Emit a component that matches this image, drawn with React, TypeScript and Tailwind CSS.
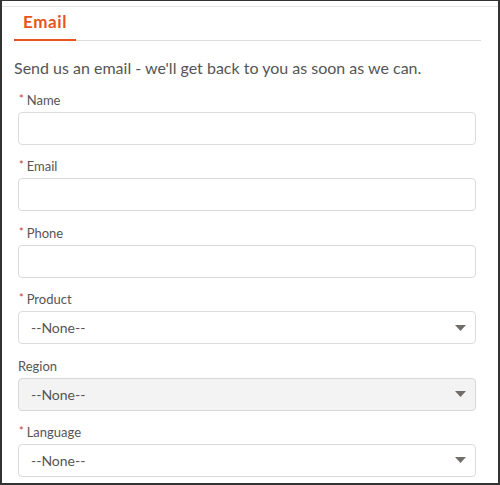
import React from "react";

function Caret() {
  return (
    <svg width="11" height="6" viewBox="0 0 11 6" className="shrink-0">
      <path d="M0 0 H11 L5.5 6 Z" fill="#706e6b" />
    </svg>
  );
}

function Label({ text, required }: { text: string; required?: boolean }) {
  return (
    <div className="h-[21px] flex items-start text-[13px] leading-[16px] text-[#555555] pt-[1px]">
      {required && (
        <span className="text-[#c23934] text-[11px] leading-[12px] mt-[1px] ml-[1px] mr-[3px]">*</span>
      )}
      <span>{text}</span>
    </div>
  );
}

function TextField({ label }: { label: string }) {
  return (
    <div className="flex flex-col">
      <Label text={label} required />
      <div className="h-[33px] rounded-[4px] border border-[#dddbda] bg-white" />
    </div>
  );
}

function SelectField({ label, required, disabled }: { label: string; required?: boolean; disabled?: boolean }) {
  return (
    <div className="flex flex-col">
      <Label text={label} required={required} />
      <div
        className={
          "h-[33px] rounded-[4px] border flex items-center justify-between pl-[12px] pr-[9px] text-[14px] text-[#555555] " +
          (disabled ? "bg-[#f3f3f3] border-[#d8d8d8]" : "bg-white border-[#dddbda]")
        }
      >
        <span>--None--</span>
        <Caret />
      </div>
    </div>
  );
}

export default function App() {
  return (
    <div
      className="w-[500px] h-[485px] bg-white border-[#333333] border-t border-l-2 border-r-2 border-b-2 overflow-hidden"
      style={{ fontFamily: "Lato, 'Open Sans', sans-serif" }}
    >
      <div className="mt-[5px] h-px bg-[#e6e6e6]" />
      <div className="ml-[12px] mr-[17px] border-b border-[#dcdcdc] flex">
        <div className="w-[62px] h-[34px] border-b-2 border-[#e8541c] -mb-px flex justify-center pt-[5px]">
          <span className="text-[17px] leading-[20px] font-bold tracking-[0.6px] text-[#e8541c]">Email</span>
        </div>
      </div>
      <div className="ml-[12px] mt-[16px] text-[16px] leading-[22px] text-[#555555]">
        Send us an email - we'll get back to you as soon as we can.
      </div>
      <div className="ml-[16px] mr-[22px] mt-[12px] flex flex-col gap-[12.4px]">
        <TextField label="Name" />
        <TextField label="Email" />
        <TextField label="Phone" />
        <SelectField label="Product" required />
        <SelectField label="Region" disabled />
        <SelectField label="Language" required />
      </div>
    </div>
  );
}
